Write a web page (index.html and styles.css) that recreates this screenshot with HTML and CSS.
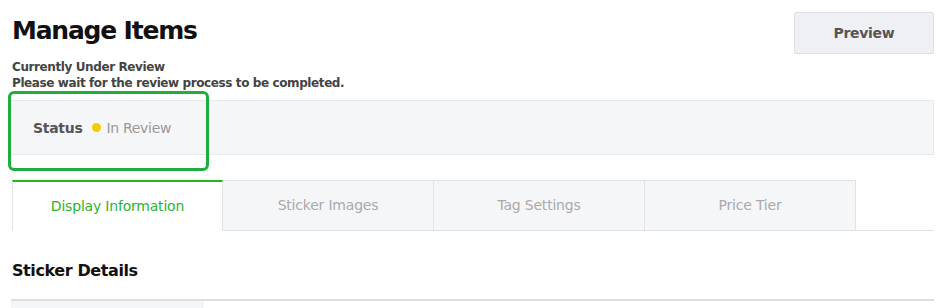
FILE: index.html
```html
<!DOCTYPE html>
<html lang="en">

<head>
	<meta charset="UTF-8" />
	<meta name="viewport" content="width=device-width, initial-scale=1.0" />
	<title>Manage Items</title>
	<link rel="stylesheet" href="styles.css">
</head>

<body>
	<div class="page">
		<div class="head">
			<h1 class="title">Manage Items</h1>
			<a class="btn-preview" href="javascript:;">Preview</a>
		</div>
		<p class="notice">Currently Under Review<br />Please wait for the review process to be completed.</p>

		<div class="status">
			<span class="status-label">Status</span>
			<span class="dot"></span>
			<span class="status-value">In Review</span>
			<div class="highlight"></div>
		</div>

		<ul class="tabs">
			<li class="tab active">Display Information</li>
			<li class="tab">Sticker Images</li>
			<li class="tab">Tag Settings</li>
			<li class="tab">Price Tier</li>
		</ul>

		<h2 class="section">Sticker Details</h2>
		<div class="table">
			<div class="th"></div>
			<div class="td"></div>
		</div>
	</div>
</body>

</html>
```

FILE: styles.css
```css
* {
	padding: 0px;
	margin: 0px;
	list-style: none;
	box-sizing: border-box;
}

body {
	font-family: "DejaVu Sans", Verdana, sans-serif;
	color: #111;
	background: #fff;
}

.page {
	padding: 0 9px 0 11px;
}

.head {
	display: flex;
	justify-content: space-between;
	align-items: flex-start;
	padding-top: 12px;
}

.title {
	font-size: 25px;
	font-weight: bold;
	line-height: 36px;
	margin-top: 1px;
	padding-left: 1px;
	letter-spacing: -1.2px;
}

.btn-preview {
	display: block;
	width: 140px;
	height: 42px;
	line-height: 40px;
	text-align: center;
	background-color: #eff0f4;
	border: 1px solid #dde0e5;
	border-radius: 2px;
	color: #555;
	font-size: 14px;
	font-weight: bold;
	letter-spacing: -0.3px;
	text-decoration: none;
}

.notice {
	margin-top: 5px;
	padding-left: 1px;
	font-size: 12px;
	font-weight: bold;
	line-height: 16px;
	letter-spacing: -0.4px;
	color: #444;
}

.status {
	position: relative;
	margin-top: 9px;
	height: 55px;
	display: flex;
	align-items: center;
	padding-left: 22px;
	background-color: #f5f6f8;
	border-top: 1px solid #e6e9ee;
	border-bottom: 1px solid #e6e9ee;
	border-right: 1px solid #e6e9ee;
	font-size: 14px;
	letter-spacing: -0.3px;
}

.status-label {
	font-weight: bold;
	color: #555;
}

.dot {
	width: 9px;
	height: 9px;
	border-radius: 50%;
	background-color: #f7cb00;
	margin: 0 5px 0 10px;
}

.status-value {
	color: #999;
}

.highlight {
	position: absolute;
	left: -3px;
	top: -10px;
	width: 201px;
	height: 80px;
	border: 3px solid #1fae3e;
	border-radius: 6px;
}

.tabs {
	display: flex;
	margin-top: 25px;
	margin-left: 1px;
	border-bottom: 1px solid #dcdfe3;
}

.tab {
	width: 211px;
	height: 51px;
	line-height: 49px;
	text-align: center;
	font-size: 14px;
	letter-spacing: -0.2px;
	color: #aaa;
	background-color: #f5f6f8;
	border-top: 1px solid #e1e3e7;
	border-right: 1px solid #e1e3e7;
	margin-bottom: -1px;
	border-bottom: 1px solid #dcdfe3;
}

.tab.active {
	color: #2db32d;
	background-color: #fff;
	border-top: 2px solid #1fb81f;
	border-left: 1px solid #e1e3e7;
	border-bottom-color: #fff;
	line-height: 48px;
}

.section {
	margin-top: 30px;
	padding-left: 1px;
	font-size: 16px;
	font-weight: bold;
	line-height: 20px;
	letter-spacing: -0.4px;
	color: #111;
}

.table {
	display: flex;
	margin-top: 18px;
	border-top: 2px solid #dcdee2;
	height: 20px;
}

.th {
	width: 192px;
	background-color: #f5f6f8;
	border-right: 1px solid #eceef1;
}

.td {
	flex: 1;
}
```
